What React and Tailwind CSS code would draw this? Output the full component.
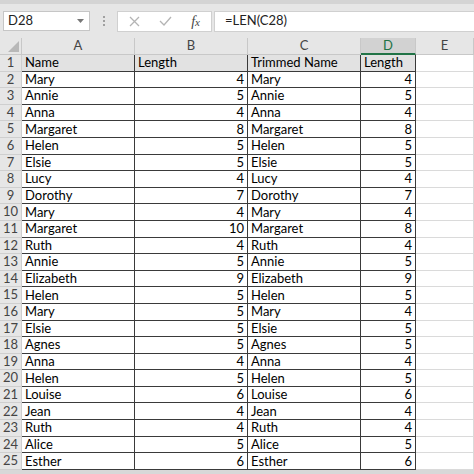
import React from 'react'

const rows = [
  ['Mary', 4, 'Mary', 4],
  ['Annie', 5, 'Annie', 5],
  ['Anna', 4, 'Anna', 4],
  ['Margaret', 8, 'Margaret', 8],
  ['Helen', 5, 'Helen', 5],
  ['Elsie', 5, 'Elsie', 5],
  ['Lucy', 4, 'Lucy', 4],
  ['Dorothy', 7, 'Dorothy', 7],
  ['Mary', 4, 'Mary', 4],
  ['Margaret', 10, 'Margaret', 8],
  ['Ruth', 4, 'Ruth', 4],
  ['Annie', 5, 'Annie', 5],
  ['Elizabeth', 9, 'Elizabeth', 9],
  ['Helen', 5, 'Helen', 5],
  ['Mary', 5, 'Mary', 4],
  ['Elsie', 5, 'Elsie', 5],
  ['Agnes', 5, 'Agnes', 5],
  ['Anna', 4, 'Anna', 4],
  ['Helen', 5, 'Helen', 5],
  ['Louise', 6, 'Louise', 6],
  ['Jean', 4, 'Jean', 4],
  ['Ruth', 4, 'Ruth', 4],
  ['Alice', 5, 'Alice', 5],
  ['Esther', 6, 'Esther', 6],
]

const cols = 'grid grid-cols-[22px_113px_113px_113px_55px_1fr]'

// 公式栏
function FormulaBar() {
  return (
    <div className="h-[38px] bg-[#e6e6e6] border-t-[4px] border-[#d4d4d4] flex items-center pl-[3px]">
      <div className="w-[87px] h-[20px] bg-white border border-[#c6c6c6] flex items-center justify-between pl-[4px] pr-[5px] text-[13px] text-[#222]">
        <span>D28</span>
        <svg width="7" height="4" viewBox="0 0 7 4"><path d="M0 0h7L3.5 4z" fill="#777" /></svg>
      </div>
      <div className="w-[27px] flex flex-col items-center gap-[2px]">
        <span className="w-[2px] h-[2px] bg-[#a0a0a0]" />
        <span className="w-[2px] h-[2px] bg-[#a0a0a0]" />
        <span className="w-[2px] h-[2px] bg-[#a0a0a0]" />
      </div>
      <div className="w-[95px] h-[21px] bg-white border border-[#d0d0d0] flex items-center justify-between px-[11px]">
        <svg width="11" height="11" viewBox="0 0 11 11"><path d="M1 1l9 9M10 1l-9 9" stroke="#b4b4b4" strokeWidth="1.3" /></svg>
        <svg width="13" height="10" viewBox="0 0 13 10"><path d="M1 5l4 4 7-8" stroke="#b4b4b4" strokeWidth="1.3" fill="none" /></svg>
        <span className="text-[14px] italic text-[#444] font-['Liberation_Serif',serif]">f<span className="text-[11px]">x</span></span>
      </div>
      <div className="flex-1 h-[21px] ml-[2px] bg-white border border-[#d0d0d0] border-r-0 flex items-center pl-[10px] text-[13px] text-[#222]">
        =LEN(C28)
      </div>
    </div>
  )
}

function ColumnHeader() {
  const base = 'h-[17px] flex items-center justify-center text-[13px] text-[#444] border-r border-b border-[#c8c8c8]'
  return (
    <div className={cols}>
      <div className={`${base} bg-[#e6e6e6] relative`}>
        <svg className="absolute right-[2px] bottom-[2px]" width="11" height="11" viewBox="0 0 11 11"><path d="M11 0v11H0z" fill="#b8b8b8" /></svg>
      </div>
      <div className={`${base} bg-[#e6e6e6]`}>A</div>
      <div className={`${base} bg-[#e6e6e6]`}>B</div>
      <div className={`${base} bg-[#e6e6e6]`}>C</div>
      <div className="h-[17px] flex items-center justify-center text-[13px] text-[#217346] bg-[#d2d2d2] border-r border-[#c8c8c8] border-b-2 border-b-[#217346]">D</div>
      <div className={`${base} bg-[#e6e6e6]`}>E</div>
    </div>
  )
}

function Row({ n, cells, head }) {
  const cell = 'h-[16.6px] flex items-center px-[3px] border-r border-b border-[#3a3a3a] text-[13px] text-black leading-none'
  const fill = head ? 'bg-[#e2e2e2]' : 'bg-white'
  return (
    <div className={cols}>
      <div className="h-[16.6px] flex items-center justify-center bg-[#e6e6e6] border-r border-b border-[#cfcfcf] text-[13px] text-[#444]">{n}</div>
      <div className={`${cell} ${fill}`}>{cells[0]}</div>
      <div className={`${cell} ${fill} ${head ? '' : 'justify-end'}`}>{cells[1]}</div>
      <div className={`${cell} ${fill}`}>{cells[2]}</div>
      <div className={`${cell} ${fill} ${head ? '' : 'justify-end'}`}>{cells[3]}</div>
      <div className="h-[16.6px] bg-white border-r border-b border-[#dadada]" />
    </div>
  )
}

export default function App() {
  return (
    <div className="w-[474px] h-[474px] overflow-hidden bg-[#d8d8d8] font-['Lato','Open_Sans',sans-serif]">
      <FormulaBar />
      <ColumnHeader />
      <Row n={1} cells={['Name', 'Length', 'Trimmed Name', 'Length']} head />
      {rows.map((r, i) => (
        <Row key={i} n={i + 2} cells={r} />
      ))}
    </div>
  )
}
